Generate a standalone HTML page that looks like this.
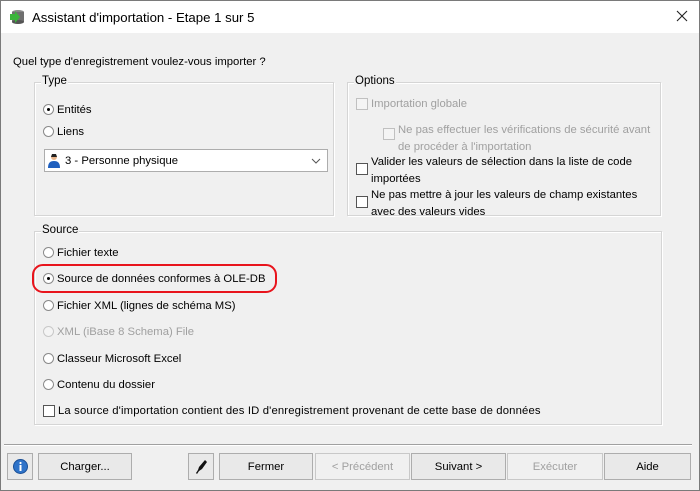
<!DOCTYPE html>
<html><head><meta charset="utf-8"><style>
*{box-sizing:border-box;margin:0;padding:0}
body{width:700px;height:491px;background:#f0f0f0;font-family:"Liberation Sans",sans-serif;font-size:11.3px;color:#000;position:relative;overflow:hidden}
.win{position:absolute;left:0;top:0;width:700px;height:491px;border:1px solid #7a7a7a}
.t{position:absolute;white-space:nowrap;padding-top:1px}
.title{position:absolute;left:0;top:0;width:698px;height:32px;background:#fff}
.grp{position:absolute;border:1px solid #d5d5d5;box-shadow:inset 1px 1px 0 #fff,1px 1px 0 #fff}
.lg{position:absolute;top:-8px;left:6px;background:#f0f0f0;padding:0 1px;font-size:11.5px}
.rad{position:absolute;width:11px;height:11px;border-radius:50%;border:1px solid #8a8a8a;background:#fff}
.rad.on::after{content:"";position:absolute;left:3px;top:3px;width:3px;height:3px;border-radius:50%;background:#000}
.rad.dis{border-color:#c8c8c8;background:#f4f4f4}
.cb{position:absolute;width:12px;height:12px;border:1px solid #555;background:#fff}
.cb.dis{border-color:#c0c0c0;background:#f4f4f4}
.g{color:#a0a0a0}
.btn{position:absolute;top:452px;height:27px;border:1px solid #adadad;background:#e9e9e9;text-align:center;line-height:27px;font-size:11.3px}
</style></head><body>
<div class="win">
<div class="title"></div>
<svg style="position:absolute;left:8px;top:8px" width="16" height="16" viewBox="0 0 16 16"><ellipse cx="9" cy="3" rx="6" ry="2" fill="#888"/><rect x="3" y="3" width="12" height="10" fill="#6f6f6f"/><ellipse cx="9" cy="13" rx="6" ry="2" fill="#555"/><path d="M1 5h5v-3l5 6-5 6v-3H1z" fill="#3bb43b"/></svg>
<div class="t" style="left:31px;top:8px;font-size:13.2px">Assistant d'importation - Etape 1 sur 5</div>
<svg style="position:absolute;left:675px;top:9px" width="12" height="12"><path d="M1 1L11 11M11 1L1 11" stroke="#222" stroke-width="1.1"/></svg>

<div class="t" style="left:12px;top:54px">Quel type d'enregistrement voulez-vous importer ?</div>

<div class="grp" style="left:33px;top:81px;width:300px;height:134px">
<div class="lg">Type</div></div>
<div class="rad on" style="left:42px;top:103px"></div><div class="t" style="left:56px;top:102px">Entités</div>
<div class="rad" style="left:42px;top:125px"></div><div class="t" style="left:56px;top:124px">Liens</div>
<div style="position:absolute;left:43px;top:148px;width:284px;height:23px;border:1px solid #adadad;background:#fff">
<svg style="position:absolute;left:3px;top:3px" width="12" height="16" viewBox="0 0 12 16"><circle cx="6" cy="4" r="3" fill="#e8b48a"/><path d="M4 1h4l1 3H3z" fill="#222"/><path d="M0 15c0-5 2-7 6-7s6 2 6 7z" fill="#1e5fbf"/></svg>
<div class="t" style="left:20px;top:4px">3 - Personne physique</div>
<svg style="position:absolute;left:266px;top:8px" width="10" height="6"><path d="M1 1l4 4 4-4" stroke="#555" fill="none"/></svg>
</div>

<div class="grp" style="left:346px;top:81px;width:314px;height:134px">
<div class="lg">Options</div></div>
<div class="cb dis" style="left:355px;top:97px"></div><div class="t g" style="left:370px;top:96px">Importation globale</div>
<div class="cb dis" style="left:382px;top:127px"></div><div class="t g" style="left:397px;top:120px;line-height:17px">Ne pas effectuer les vérifications de sécurité avant<br>de procéder à l'importation</div>
<div class="cb" style="left:355px;top:162px"></div><div class="t" style="left:370px;top:152px;line-height:17px">Valider les valeurs de sélection dans la liste de code<br>importées</div>
<div class="cb" style="left:355px;top:195px"></div><div class="t" style="left:370px;top:185px;line-height:17px">Ne pas mettre à jour les valeurs de champ existantes<br>avec des valeurs vides</div>

<div class="grp" style="left:33px;top:230px;width:628px;height:194px">
<div class="lg">Source</div></div>
<div class="rad" style="left:42px;top:246px"></div><div class="t" style="left:56px;top:245px">Fichier texte</div>
<div style="position:absolute;left:31px;top:263px;width:245px;height:29px;border:2.5px solid #e8141c;border-radius:11px"></div>
<div class="rad on" style="left:42px;top:272px"></div><div class="t" style="left:56px;top:271px">Source de données conformes à OLE-DB</div>
<div class="rad" style="left:42px;top:299px"></div><div class="t" style="left:56px;top:298px">Fichier XML (lignes de schéma MS)</div>
<div class="rad dis" style="left:42px;top:325px"></div><div class="t g" style="left:56px;top:324px">XML (iBase 8 Schema) File</div>
<div class="rad" style="left:42px;top:352px"></div><div class="t" style="left:56px;top:351px">Classeur Microsoft Excel</div>
<div class="rad" style="left:42px;top:378px"></div><div class="t" style="left:56px;top:377px">Contenu du dossier</div>
<div class="cb" style="left:42px;top:404px"></div><div class="t" style="left:57px;top:403px;letter-spacing:0.15px">La source d'importation contient des ID d'enregistrement provenant de cette base de données</div>

<div style="position:absolute;left:3px;top:443px;width:688px;height:2px;border-top:1px solid #a0a0a0;border-bottom:1px solid #fff"></div>

<div class="btn" style="left:6px;width:26px"><svg style="margin-top:5px" width="15" height="15"><circle cx="7.5" cy="7.5" r="7" fill="#2f73c9" stroke="#1a4f96"/><rect x="6.5" y="6" width="2" height="6" fill="#fff"/><circle cx="7.5" cy="4" r="1.1" fill="#fff"/></svg></div>
<div class="btn" style="left:37px;width:94px">Charger...</div>
<div class="btn" style="left:187px;width:26px"><svg style="margin-top:5px" width="14" height="16" viewBox="0 0 14 16"><path d="M11 1l2 2-5 7-3 2-2 3-1-1 2-3 1-3z" fill="#111"/></svg></div>
<div class="btn" style="left:218px;width:94px">Fermer</div>
<div class="btn g" style="left:314px;width:95px;background:#f0f0f0;border-color:#c8c8c8">&lt; Précédent</div>
<div class="btn" style="left:410px;width:95px">Suivant &gt;</div>
<div class="btn g" style="left:506px;width:96px;background:#f0f0f0;border-color:#c8c8c8">Exécuter</div>
<div class="btn" style="left:603px;width:87px">Aide</div>
</div>
</body></html>
